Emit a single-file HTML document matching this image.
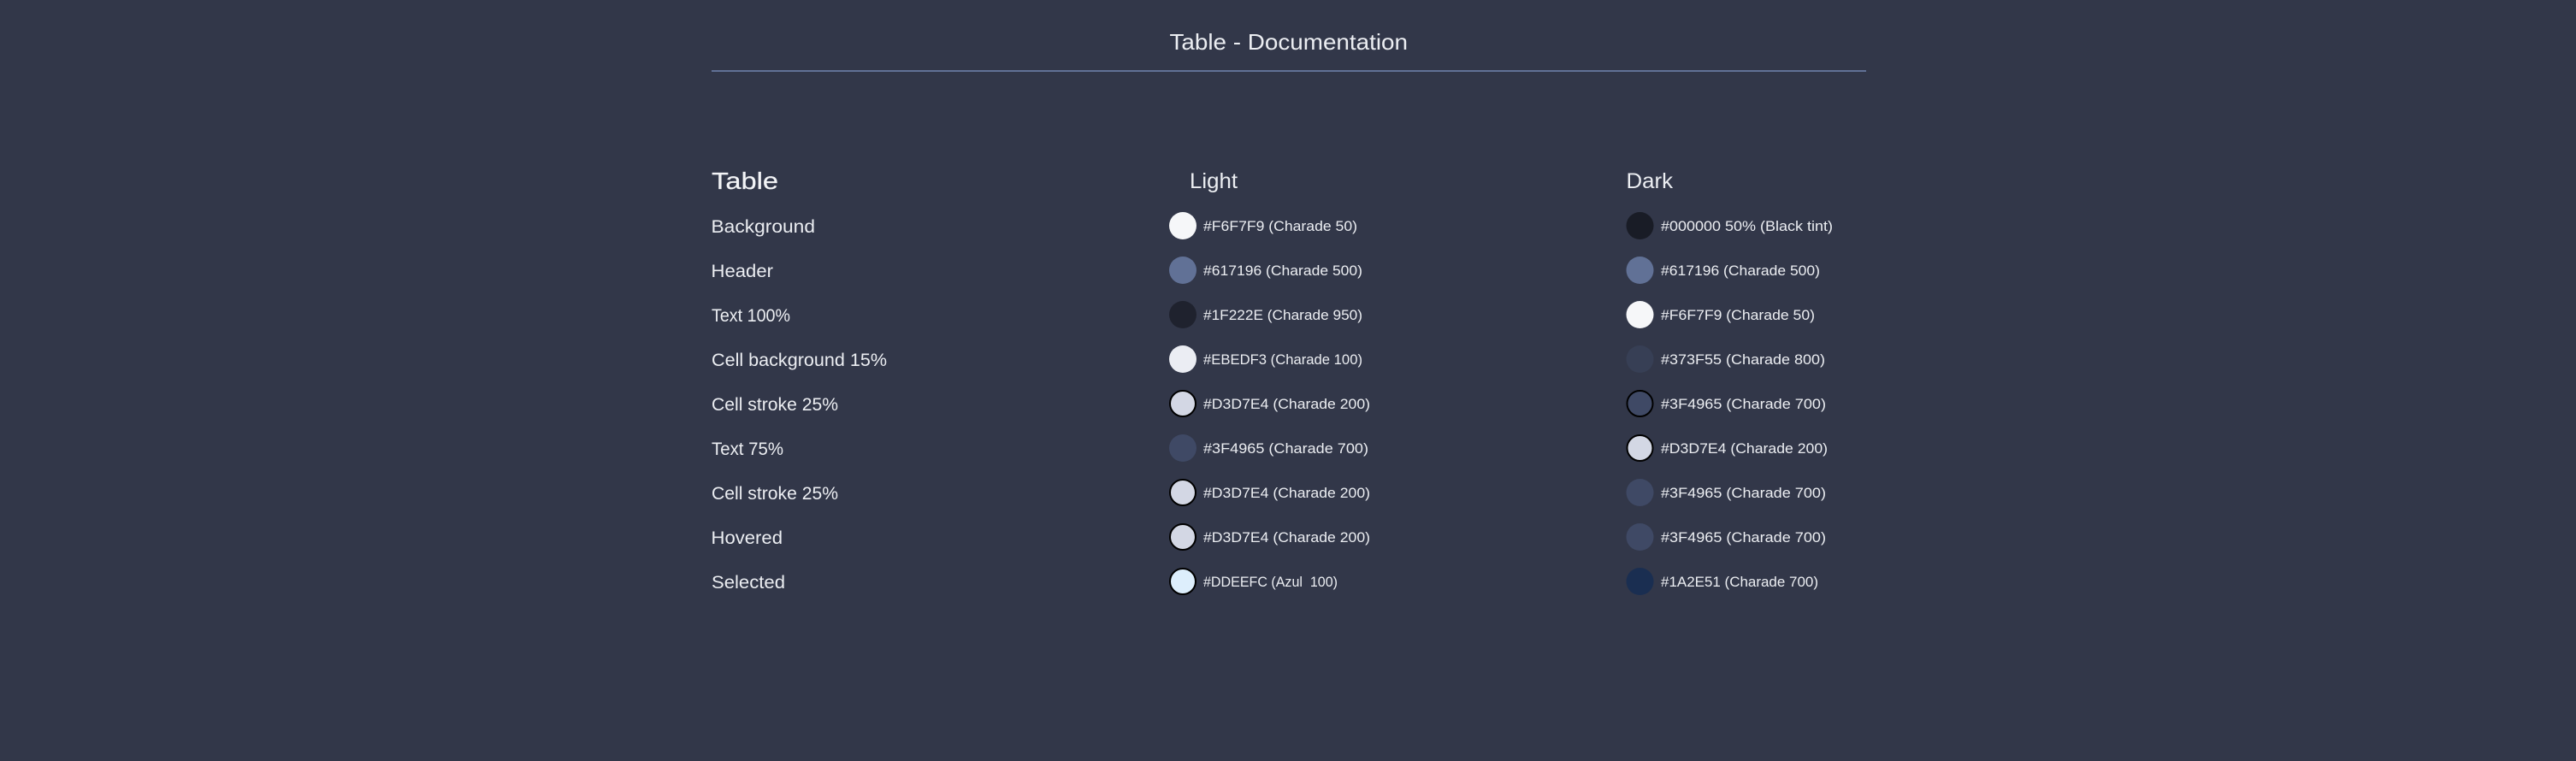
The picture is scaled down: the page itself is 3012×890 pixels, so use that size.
<!DOCTYPE html>
<html lang="en">
<head>
<meta charset="utf-8">
<title>Table - Documentation</title>
<style>
html,body{margin:0;padding:0;width:3012px;height:890px;overflow:hidden;background:#323749}
svg{display:block}
text{font-family:"Liberation Sans",sans-serif;fill:#eceef2}
.t{font-size:26px}
.h{font-size:28px;fill:#f3f4f7;stroke:#f3f4f7;stroke-width:.2px}
.s{font-size:25px}
.l{font-size:21px}
.c{font-size:17px}
</style>
</head>
<body>
<svg width="3012" height="890" viewBox="0 0 3012 890" xmlns="http://www.w3.org/2000/svg">
<rect width="3012" height="890" fill="#323749"/>
<text class="t" x="1367.5" y="58" textLength="278.5" lengthAdjust="spacingAndGlyphs">Table - Documentation</text>
<rect x="832" y="82" width="1350" height="2" fill="#617196"/>

<text class="h" x="832" y="221" textLength="78" lengthAdjust="spacingAndGlyphs">Table</text>
<text class="s" x="1391" y="220" textLength="56" lengthAdjust="spacingAndGlyphs">Light</text>
<text class="s" x="1901.5" y="220" textLength="54.5" lengthAdjust="spacingAndGlyphs">Dark</text>

<text class="l" x="831.5" y="272" textLength="121.5" lengthAdjust="spacingAndGlyphs">Background</text>
<text class="l" x="831.5" y="324" textLength="72.5" lengthAdjust="spacingAndGlyphs">Header</text>
<text class="l" x="832" y="376" textLength="92" lengthAdjust="spacingAndGlyphs">Text 100%</text>
<text class="l" x="832" y="428" textLength="205" lengthAdjust="spacingAndGlyphs">Cell background 15%</text>
<text class="l" x="832" y="480" textLength="148" lengthAdjust="spacingAndGlyphs">Cell stroke 25%</text>
<text class="l" x="832" y="532" textLength="84" lengthAdjust="spacingAndGlyphs">Text 75%</text>
<text class="l" x="832" y="584" textLength="148" lengthAdjust="spacingAndGlyphs">Cell stroke 25%</text>
<text class="l" x="831.5" y="636" textLength="83.5" lengthAdjust="spacingAndGlyphs">Hovered</text>
<text class="l" x="832" y="688" textLength="86" lengthAdjust="spacingAndGlyphs">Selected</text>

<circle cx="1383" cy="264" r="16" fill="#f6f7f9"/>
<circle cx="1383" cy="316" r="16" fill="#617196"/>
<circle cx="1383" cy="368" r="16" fill="#1f222e"/>
<circle cx="1383" cy="420" r="16" fill="#ebedf3"/>
<circle cx="1383" cy="472" r="15" fill="#d3d7e4" stroke="#000" stroke-width="2"/>
<circle cx="1383" cy="524" r="16" fill="#3f4965"/>
<circle cx="1383" cy="576" r="15" fill="#d3d7e4" stroke="#000" stroke-width="2"/>
<circle cx="1383" cy="628" r="15" fill="#d3d7e4" stroke="#000" stroke-width="2"/>
<circle cx="1383" cy="680" r="15" fill="#ddeefc" stroke="#000" stroke-width="2"/>

<text class="c" x="1407" y="270" textLength="180" lengthAdjust="spacingAndGlyphs">#F6F7F9 (Charade 50)</text>
<text class="c" x="1407" y="322" textLength="186" lengthAdjust="spacingAndGlyphs">#617196 (Charade 500)</text>
<text class="c" x="1407" y="374" textLength="186" lengthAdjust="spacingAndGlyphs">#1F222E (Charade 950)</text>
<text class="c" x="1407" y="426" textLength="186" lengthAdjust="spacingAndGlyphs">#EBEDF3 (Charade 100)</text>
<text class="c" x="1407" y="478" textLength="195" lengthAdjust="spacingAndGlyphs">#D3D7E4 (Charade 200)</text>
<text class="c" x="1407" y="530" textLength="193" lengthAdjust="spacingAndGlyphs">#3F4965 (Charade 700)</text>
<text class="c" x="1407" y="582" textLength="195" lengthAdjust="spacingAndGlyphs">#D3D7E4 (Charade 200)</text>
<text class="c" x="1407" y="634" textLength="195" lengthAdjust="spacingAndGlyphs">#D3D7E4 (Charade 200)</text>
<text class="c" x="1407" y="686" textLength="157" lengthAdjust="spacingAndGlyphs" xml:space="preserve">#DDEEFC (Azul  100)</text>

<circle cx="1917.5" cy="264" r="16" fill="#191c26"/>
<circle cx="1917.5" cy="316" r="16" fill="#617196"/>
<circle cx="1917.5" cy="368" r="16" fill="#f6f7f9"/>
<circle cx="1917.5" cy="420" r="16" fill="#373f55"/>
<circle cx="1917.5" cy="472" r="15" fill="#3f4965" stroke="#000" stroke-width="2"/>
<circle cx="1917.5" cy="524" r="15" fill="#d3d7e4" stroke="#000" stroke-width="2"/>
<circle cx="1917.5" cy="576" r="16" fill="#3f4965"/>
<circle cx="1917.5" cy="628" r="16" fill="#3f4965"/>
<circle cx="1917.5" cy="680" r="16" fill="#1a2e51"/>

<text class="c" x="1942" y="270" textLength="201" lengthAdjust="spacingAndGlyphs">#000000 50% (Black tint)</text>
<text class="c" x="1942" y="322" textLength="186" lengthAdjust="spacingAndGlyphs">#617196 (Charade 500)</text>
<text class="c" x="1942" y="374" textLength="180" lengthAdjust="spacingAndGlyphs">#F6F7F9 (Charade 50)</text>
<text class="c" x="1942" y="426" textLength="192" lengthAdjust="spacingAndGlyphs">#373F55 (Charade 800)</text>
<text class="c" x="1942" y="478" textLength="193" lengthAdjust="spacingAndGlyphs">#3F4965 (Charade 700)</text>
<text class="c" x="1942" y="530" textLength="195" lengthAdjust="spacingAndGlyphs">#D3D7E4 (Charade 200)</text>
<text class="c" x="1942" y="582" textLength="193" lengthAdjust="spacingAndGlyphs">#3F4965 (Charade 700)</text>
<text class="c" x="1942" y="634" textLength="193" lengthAdjust="spacingAndGlyphs">#3F4965 (Charade 700)</text>
<text class="c" x="1942" y="686" textLength="184" lengthAdjust="spacingAndGlyphs">#1A2E51 (Charade 700)</text>
</svg>
</body>
</html>
